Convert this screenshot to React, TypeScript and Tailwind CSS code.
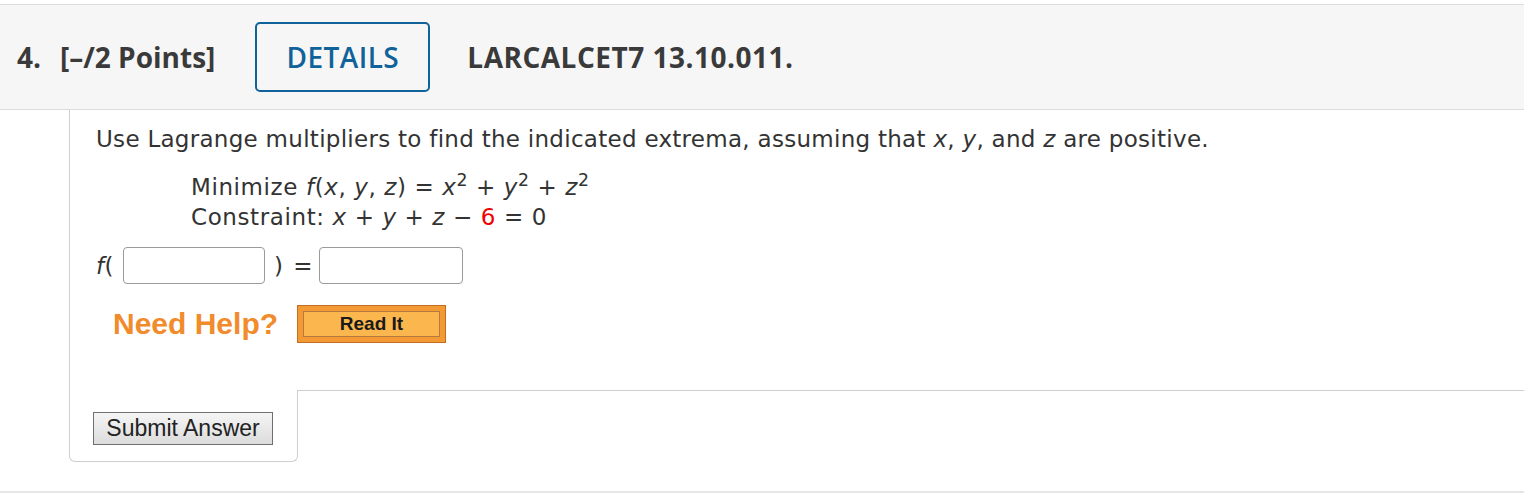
import React from "react";

const body = { fontFamily: '"DejaVu Sans", Verdana, sans-serif' };
const head = { fontFamily: '"Open Sans", sans-serif' };
const arial = { fontFamily: '"Liberation Sans", Arial, sans-serif' };

export default function App() {
  return (
    <div className="w-[1524px] h-[494px] bg-white overflow-hidden pt-[4px]">
      {/* header */}
      <div
        className="h-[106px] border-t border-b border-[#dcdcdc] bg-[#f6f6f6] flex items-center text-[28px] font-bold text-[#3a3a3a]"
        style={head}
      >
        <span className="ml-[17px]">4.</span>
        <span className="ml-[19px]">[–/2 Points]</span>
        <div className="ml-[40px] w-[175px] h-[70px] border-2 border-[#10629a] rounded-[5px] flex items-center justify-center text-[#10629a] font-semibold tracking-[0.4px]">
          DETAILS
        </div>
        <span className="ml-[37px] tracking-[0.5px]">LARCALCET7 13.10.011.</span>
      </div>

      {/* question body */}
      <div className="ml-[69px]">
        <div
          className="h-[280px] border-l border-[#cfcfcf] pl-[26px] pt-[14px] text-[23px] leading-[30px] tracking-[0.28px] text-[#333]"
          style={body}
        >
          <div>
            Use Lagrange multipliers to find the indicated extrema, assuming that <i>x</i>, <i>y</i>, and <i>z</i> are positive.
          </div>
          <div className="ml-[95px] mt-[18px] tracking-[0.6px]">
            <div>
              Minimize <i>f</i>(<i>x</i>, <i>y</i>, <i>z</i>) = <i>x</i>
              <sup>2</sup> + <i>y</i>
              <sup>2</sup> + <i>z</i>
              <sup>2</sup>
            </div>
            <div>
              Constraint: <i>x</i> + <i>y</i> + <i>z</i> − <span className="text-[#ee0000]">6</span> = 0
            </div>
          </div>
          <div className="mt-[15px] flex items-center h-[37px]">
            <span className="w-[27px]">
              <i>f</i>(
            </span>
            <div className="w-[142px] h-[37px] border border-[#9a9a9a] rounded-[4px] bg-white" />
            <div className="w-[54px] flex items-center">
              <span className="ml-[9px]">)</span>
              <span className="ml-[10px]">=</span>
            </div>
            <div className="w-[144px] h-[37px] border border-[#9a9a9a] rounded-[4px] bg-white" />
          </div>
          <div className="mt-[21px] flex items-center">
            <span
              className="ml-[17px] w-[184px] text-[30px] font-bold text-[#f18b2c] leading-[38px] tracking-normal"
              style={arial}
            >
              Need Help?
            </span>
            <div className="w-[149px] h-[38px] border border-[#c26d25] bg-[#f39a35] p-[5px]">
              <div
                className="w-full h-full border border-[#b57a40] bg-[#fbb74e] flex items-center justify-center text-[19px] font-bold text-[#1a1a1a] tracking-normal"
                style={arial}
              >
                Read It
              </div>
            </div>
          </div>
        </div>
        <div className="flex">
          <div className="w-[229px] h-[72px] border-l border-r border-b border-[#cfcfcf] rounded-b-[6px] pl-[23px] pt-[22px]">
            <div
              className="w-[180px] h-[33px] border border-[#6f6f6f] bg-gradient-to-b from-[#f5f5f5] to-[#dcdcdc] flex items-center justify-center text-[23px] text-[#222]"
              style={arial}
            >
              Submit Answer
            </div>
          </div>
          <div className="flex-1 border-t border-[#cfcfcf]" />
        </div>
      </div>
      <div className="mt-[29px] h-[2px] bg-[#e6e6e6]" />
    </div>
  );
}
